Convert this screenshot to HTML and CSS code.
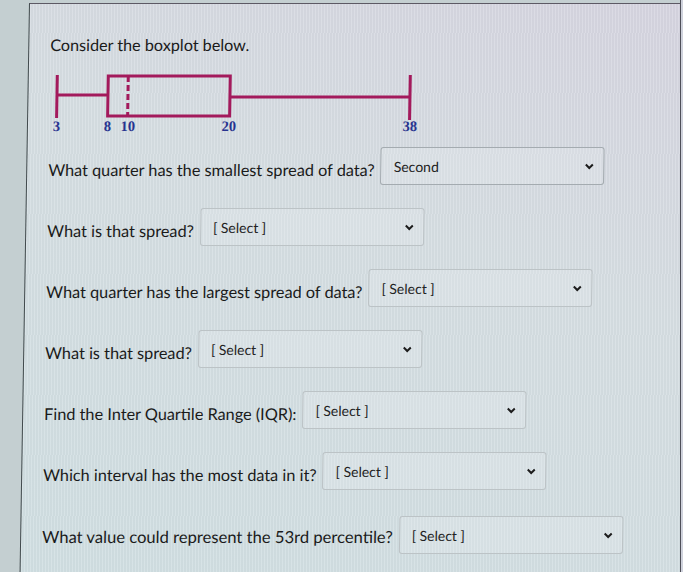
FILE: index.html
```html
<!DOCTYPE html>
<html lang="en">
<head>
<meta charset="utf-8">
<title>Boxplot quiz</title>
<link rel="stylesheet" href="styles.css">
</head>
<body>
<div class="screen">
  <div class="panel">
    <p class="intro">Consider the boxplot below.</p>
    <svg class="boxplot" width="370" height="64" viewBox="0 0 370 64" aria-label="Boxplot">
      <g stroke="#a31a5c" stroke-width="3" fill="none">
        <line x1="7.5" y1="5" x2="7.5" y2="48"/>
        <line x1="7.5" y1="25" x2="58.5" y2="25"/>
        <rect x="58.5" y="6" width="122" height="40"/>
        <line x1="78.5" y1="6" x2="78.5" y2="46" stroke-dasharray="6 3"/>
        <line x1="180.5" y1="27" x2="360.5" y2="27"/>
        <line x1="360.5" y1="5" x2="360.5" y2="50"/>
      </g>
      <g class="ticks" fill="#27338f">
        <text x="7.5" y="61" text-anchor="middle">3</text>
        <text x="58.5" y="61" text-anchor="middle">8</text>
        <text x="79" y="61" text-anchor="middle">10</text>
        <text x="180" y="61" text-anchor="middle">20</text>
        <text x="361" y="61" text-anchor="middle">38</text>
      </g>
    </svg>
    <div class="questions">
      <div class="q">
        <span class="label">What quarter has the smallest spread of data?</span>
        <div class="select chosen"><span class="value">Second</span><svg class="chev" width="10" height="7" viewBox="0 0 10 7"><path d="M1.5 1.5 L5 5 L8.5 1.5" fill="none" stroke="#1d1d1d" stroke-width="2"/></svg></div>
      </div>
      <div class="q">
        <span class="label">What is that spread?</span>
        <div class="select"><span class="value">[ Select ]</span><svg class="chev" width="10" height="7" viewBox="0 0 10 7"><path d="M1.5 1.5 L5 5 L8.5 1.5" fill="none" stroke="#1d1d1d" stroke-width="2"/></svg></div>
      </div>
      <div class="q">
        <span class="label">What quarter has the largest spread of data?</span>
        <div class="select"><span class="value">[ Select ]</span><svg class="chev" width="10" height="7" viewBox="0 0 10 7"><path d="M1.5 1.5 L5 5 L8.5 1.5" fill="none" stroke="#1d1d1d" stroke-width="2"/></svg></div>
      </div>
      <div class="q">
        <span class="label">What is that spread?</span>
        <div class="select"><span class="value">[ Select ]</span><svg class="chev" width="10" height="7" viewBox="0 0 10 7"><path d="M1.5 1.5 L5 5 L8.5 1.5" fill="none" stroke="#1d1d1d" stroke-width="2"/></svg></div>
      </div>
      <div class="q">
        <span class="label">Find the Inter Quartile Range (IQR):</span>
        <div class="select"><span class="value">[ Select ]</span><svg class="chev" width="10" height="7" viewBox="0 0 10 7"><path d="M1.5 1.5 L5 5 L8.5 1.5" fill="none" stroke="#1d1d1d" stroke-width="2"/></svg></div>
      </div>
      <div class="q">
        <span class="label">Which interval has the most data in it?</span>
        <div class="select"><span class="value">[ Select ]</span><svg class="chev" width="10" height="7" viewBox="0 0 10 7"><path d="M1.5 1.5 L5 5 L8.5 1.5" fill="none" stroke="#1d1d1d" stroke-width="2"/></svg></div>
      </div>
      <div class="q">
        <span class="label">What value could represent the 53rd percentile?</span>
        <div class="select"><span class="value">[ Select ]</span><svg class="chev" width="10" height="7" viewBox="0 0 10 7"><path d="M1.5 1.5 L5 5 L8.5 1.5" fill="none" stroke="#1d1d1d" stroke-width="2"/></svg></div>
      </div>
    </div>
  </div>
</div>
</body>
</html>
```
FILE: styles.css
```css
html, body {
  margin: 0;
  padding: 0;
}
body {
  background: #cfd2dc;
  font-family: Lato, "Open Sans", sans-serif;
  color: #1a1a1a;
}
.screen {
  width: 680px;
  height: 572px;
  overflow: hidden;
  background: #c4cfd1;
  border-right: 1px solid #4e4f58;
}
.panel {
  margin: 3px 0 0 29px;
  width: 720px;
  height: 640px;
  box-sizing: border-box;
  padding: 31px 0 0 21px;
  border-top: 1px solid #5c5964;
  border-left: 1px solid #414a4d;
  background:
    repeating-linear-gradient(90deg, rgba(255,255,255,0.10) 0 1px, rgba(0,0,0,0.025) 1px 3px),
    linear-gradient(200deg, #d7d5e1 0%, #d7dfe3 38%, #d1e0e3 100%);
  transform: skewX(-0.95deg);
  transform-origin: 0 0;
}
.intro {
  margin: 0;
  font-size: 16.2px;
  line-height: 20px;
}
.boxplot {
  display: block;
  margin-top: 15px;
}
.ticks {
  font-family: "Liberation Serif", serif;
  font-weight: bold;
  font-size: 14.5px;
}
.questions {
  margin-top: 13px;
  display: flex;
  flex-direction: column;
  gap: 23px;
}
.q:last-child {
  margin-top: 3px;
}
.q {
  display: flex;
  align-items: center;
  gap: 6px;
  height: 38px;
}
.label {
  font-size: 16.3px;
  line-height: 20px;
  padding-top: 7px;
}
.q:last-child .label {
  font-size: 16.6px;
  padding-top: 4px;
}
.select {
  box-sizing: border-box;
  width: 224px;
  height: 38px;
  display: flex;
  align-items: center;
  justify-content: space-between;
  padding: 0 9px 0 12px;
  border: 1px solid #bcc3c6;
  border-radius: 3px;
  background: rgba(235, 240, 242, 0.25);
}
.select.chosen {
  border-color: #a4abb0;
}
.value {
  font-size: 14px;
  color: #222;
}
.chev {
  display: block;
}
```
